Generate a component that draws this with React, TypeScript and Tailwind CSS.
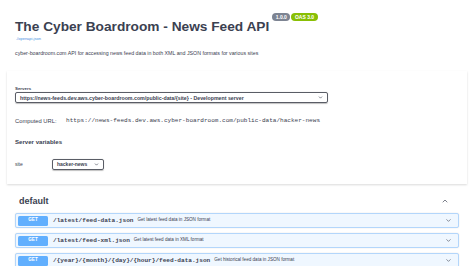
import { ChevronDown, ChevronUp } from 'lucide-react';

const sans = "font-['Liberation_Sans',Arial,sans-serif]";
const mono = "font-['Liberation_Mono','DejaVu_Sans_Mono',monospace]";

const operations = [
  { path: '/latest/feed-data.json', summary: 'Get latest feed data in JSON format' },
  { path: '/latest/feed-xml.json', summary: 'Get latest feed data in XML format' },
  { path: '/{year}/{month}/{day}/{hour}/feed-data.json', summary: 'Get historical feed data in JSON format' },
];

export default function App() {
  return (
    <div className={`${sans} h-[266px] w-[474px] overflow-hidden bg-white text-[#3b4151]`}>
      <div className="px-[15px] pt-[13px]">
        <div className="flex items-start">
          <h1 className="mt-[6px] text-[13.7px] font-bold leading-[16px]">The Cyber Boardroom - News Feed API</h1>
          <span className="ml-[3px] h-[8px] rounded-[4px] bg-[#7d8492] px-[3.5px] text-[5px] font-bold leading-[8px] text-white">1.0.0</span>
          <span className="ml-[1px] h-[8px] rounded-[4px] bg-[#89bf04] px-[3.5px] text-[5px] font-bold leading-[8px] text-white">OAS 3.0</span>
        </div>
        <div className="mt-[1px] pl-[1px] text-[4px] leading-[6px] text-[#4990e2]">./openapi.json</div>
        <p className="mt-[7px] text-[5.28px] leading-[8px]">cyber-boardroom.com API for accessing news feed data in both XML and JSON formats for various sites</p>
      </div>

      <div className="mx-[7px] mt-[14px] h-[113px] bg-white px-[8px] pt-[15px] shadow-[0_1px_2px_0_rgba(0,0,0,0.15)]">
        <div className="text-[4.4px] font-bold leading-[6px]">Servers</div>
        <div className="flex h-[11px] w-[313px] items-center justify-between rounded-[2px] border border-[#5a5d66] px-[4px] shadow-[0_0.5px_1px_0_rgba(0,0,0,0.25)]">
          <span className="text-[5.25px] font-bold leading-[6px]">https://news-feeds.dev.aws.cyber-boardroom.com/public-data/{'{site}'} - Development server</span>
          <ChevronDown size={5} strokeWidth={3} className="text-[#3b4151]" />
        </div>

        <div className="mt-[14px] flex items-center text-[5.8px] leading-[8px] text-[#3b4151]">
          <span className="w-[51px]">Computed URL:</span>
          <span className={`${mono} text-[6.05px]`}>https://news-feeds.dev.aws.cyber-boardroom.com/public-data/hacker-news</span>
        </div>

        <div className="mt-[13px] text-[6.1px] font-bold leading-[8px]">Server variables</div>

        <div className="mt-[13px] flex items-center text-[5px]">
          <span className="w-[37px]">site</span>
          <div className="flex h-[11px] w-[52px] items-center justify-between rounded-[2px] border border-[#5a5d66] px-[4px] shadow-[0_0.5px_1px_0_rgba(0,0,0,0.25)]">
            <span className="text-[5px] font-bold">hacker-news</span>
            <ChevronDown size={5} strokeWidth={3} />
          </div>
        </div>
      </div>

      <div className="mx-[15px] mt-[11px]">
        <div className="flex items-center justify-between pl-[4px] pr-[10px]">
          <h3 className="text-[9px] font-bold leading-[12px]">default</h3>
          <ChevronUp size={8} strokeWidth={2} className="text-[#3b4151]" />
        </div>
        <div className="mt-[6px] flex flex-col gap-[5px]">
          {operations.map((op) => (
            <div
              key={op.path}
              className="flex h-[15px] items-center rounded-[2px] border border-[#b3d6fb] bg-[#eff7ff] pl-[2px] pr-[6px] shadow-[0_0_1.5px_rgba(0,0,0,0.12)]"
            >
              <span className="flex h-[10px] w-[30px] items-center justify-center rounded-[1.5px] bg-[#61affe] text-[4.6px] font-bold text-white">GET</span>
              <span className={`${mono} ml-[5px] text-[6.1px] font-bold text-[#3b4151]`}>{op.path}</span>
              <span className="ml-[4px] text-[4.6px] text-[#3b4151]">{op.summary}</span>
              <ChevronDown size={7} strokeWidth={2} className="ml-auto text-[#3b4151]" />
            </div>
          ))}
        </div>
      </div>
    </div>
  );
}
